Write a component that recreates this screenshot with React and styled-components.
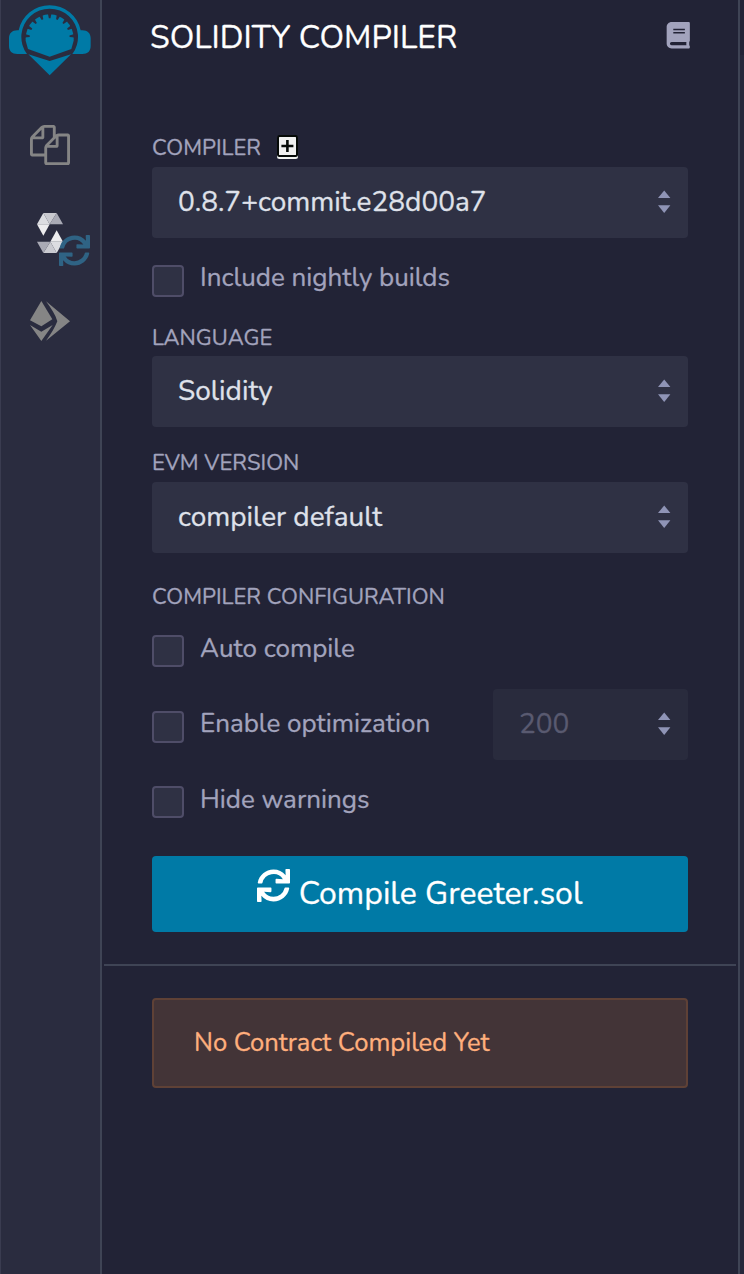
import React, { useState } from 'react';
import styled, { createGlobalStyle } from 'styled-components';
import { FaBook, FaSync } from 'react-icons/fa';

const versions = ['0.8.7+commit.e28d00a7'];

const Logo = () => (
  <svg width="84" height="72" viewBox="24 12 252 216">
    <path
      fill="#007aa6"
      d="M56 91A95 95 0 0 1 242 91h5c16 0 25 9 25 24v23c0 15-9 24-25 24h-30a85 85 0 1 0-136 0H52c-16 0-25-9-25-24v-23c0-15 9-24 25-24z"
    />
    <path
      fill="#007aa6"
      d="M84 147L77 122V115A72 72 0 0 1 221 115v7l-7 25-65 23z"
    />
    <g fill="#2a2c3f">
      {[-84, -63, -42, -21, 0, 21, 42, 63, 84].map((deg) => (
        <path
          key={deg}
          d="M143.500 40h11l-3 15h-5z"
          transform={`rotate(${deg} 149 115)`}
        />
      ))}
    </g>
    <path fill="#007aa6" d="M85 163l64 20 64-20-64 63z" />
  </svg>
);

const FilesIcon = () => (
  <svg width="40" height="40" viewBox="0 0 1792 1792" fill="#858585">
    <path d="M1696 384q40 0 68 28t28 68v1216q0 40-28 68t-68 28h-960q-40 0-68-28t-28-68v-288h-544q-40 0-68-28t-28-68v-672q0-40 20-88t48-76l408-408q28-28 76-48t88-20h416q40 0 68 28t28 68v328q68-40 128-40h416zm-544 213l-299 299h299v-299zm-640-384l-299 299h299v-299zm196 647l316-316v-416h-384v416q0 40-28 68t-68 28h-416v640h512v-256q0-40 20-88t48-76zm956 804v-1152h-384v416q0 40-28 68t-68 28h-416v640h896z" />
  </svg>
);

const SolidityIcon = () => (
  <svg width="26" height="40" viewBox="111 39 78 120">
    <path fill="#dcdde1" d="M130 39l19 34h-38z" />
    <path fill="#c9cad0" d="M130 39h40l-21 34z" />
    <path fill="#a9aab5" d="M170 39l19 34h-40z" />
    <path fill="#ececee" d="M111 73h38l-19 34z" />
    <path fill="#ececee" d="M170 91l19 34h-38z" />
    <path fill="#dcdde1" d="M189 125l-19 34-19-34z" />
    <path fill="#c9cad0" d="M151 125l19 34h-40z" />
    <path fill="#a9aab5" d="M111 125h40l-21 34z" />
  </svg>
);

const DeployIcon = () => (
  <svg width="40" height="40" viewBox="90 303 120 120" fill="#858585">
    <path d="M124 303l33 55-33 21-34-18z" />
    <path d="M90 375l34 20 34-20-34 48z" />
    <path d="M138 304l72 60-72 58c16-22 26-38 34-58-6-20-18-38-34-60z" />
  </svg>
);

const PlusIcon = () => (
  <svg width="21" height="24" viewBox="0 0 21 24">
    <rect y="1" width="21" height="23" rx="2.5" fill="#f2f4f2" />
    <rect width="21" height="22" rx="2.5" fill="#060a08" />
    <rect x="2" y="2" width="17" height="18" rx="0.5" fill="#f0f0f0" />
    <path d="M10.400 5v12M4.400 11h12" stroke="#060a08" strokeWidth="2.6" />
  </svg>
);

const Carets = () => (
  <svg width="13" height="24" viewBox="0 0 13 24" fill="#8f94b6">
    <path d="M6.200 0.500L12.400 8H0z" />
    <path d="M0 15.200h12.400L6.200 23z" />
  </svg>
);

const SelectBox = ({ value }) => (
  <Select>
    {value}
    <Carets />
  </Select>
);

const App = () => {
  const [checked, setChecked] = useState({});
  const toggle = (name) => () =>
    setChecked({ ...checked, [name]: !checked[name] });

  return (
    <Page>
      <GlobalStyle />
      <Sidebar>
        <Logo />
        <NavItem $top={49} $left={29}>
          <FilesIcon />
        </NavItem>
        <NavItem $top={48} $left={36}>
          <SolidityIcon />
          <Badge>
            <FaSync size={31} />
          </Badge>
        </NavItem>
        <NavItem $top={48} $left={29}>
          <DeployIcon />
        </NavItem>
      </Sidebar>
      <Panel>
        <Header>
          <Title>SOLIDITY COMPILER</Title>
          <FaBook size={26.5} />
        </Header>
        <Section>
          <Label $top={62} $bottom={7}>
            COMPILER
            <PlusIcon />
          </Label>
          <SelectBox value={versions[0]} />
          <CheckRow $top={27}>
            <Checkbox onClick={toggle('nightly')} $on={checked.nightly} />
            <CheckText $lift={5}>Include nightly builds</CheckText>
          </CheckRow>
          <Label $top={29} $bottom={6}>
            LANGUAGE
          </Label>
          <SelectBox value="Solidity" />
          <Label $top={24} $bottom={7}>
            EVM VERSION
          </Label>
          <SelectBox value="compiler default" />
          <Label $top={32} $bottom={0}>
            COMPILER CONFIGURATION
          </Label>
          <CheckRow $top={26}>
            <Checkbox onClick={toggle('auto')} $on={checked.auto} />
            <CheckText $lift={4}>Auto compile</CheckText>
          </CheckRow>
          <OptimizeRow>
            <CheckRow $top={22}>
              <Checkbox onClick={toggle('optimize')} $on={checked.optimize} />
              <CheckText $lift={5}>Enable optimization</CheckText>
            </CheckRow>
            <Runs>
              200
              <Carets />
            </Runs>
          </OptimizeRow>
          <CheckRow $top={26}>
            <Checkbox onClick={toggle('warnings')} $on={checked.warnings} />
            <CheckText $lift={4}>Hide warnings</CheckText>
          </CheckRow>
          <CompileButton>
            <FaSync size={33} />
            <span>Compile Greeter.sol</span>
          </CompileButton>
        </Section>
        <Divider />
        <Section>
          <Alert>No Contract Compiled Yet</Alert>
        </Section>
      </Panel>
      <Editor>
        <EditorTabs />
      </Editor>
    </Page>
  );
};

export default App;

const GlobalStyle = createGlobalStyle`
  * {
    box-sizing: border-box;
  }
  body {
    margin: 0;
    background: #222336;
    font-family: Nunito, 'Nunito Sans', Lato, 'Open Sans', sans-serif;
    -webkit-text-stroke: 0.3px currentColor;
  }
  svg {
    display: block;
    flex-shrink: 0;
  }
`;

const Page = styled.div`
  display: flex;
  width: 744px;
  height: 1274px;
  overflow: hidden;
`;

const Sidebar = styled.nav`
  width: 102px;
  flex-shrink: 0;
  padding: 4px 0 0 7px;
  background: #2a2c3f;
  border-left: 1px solid #3a3c50;
  border-right: 2px solid #3f4455;
`;

const NavItem = styled.div`
  position: relative;
  width: max-content;
  margin-top: ${(props) => props.$top}px;
  margin-left: ${(props) => props.$left - 7}px;
`;

const Badge = styled.span`
  position: absolute;
  left: 22px;
  top: 22px;
  color: #2f6384;
`;

const Panel = styled.main`
  width: 636px;
  flex-shrink: 0;
`;

const Header = styled.header`
  display: flex;
  align-items: flex-start;
  justify-content: space-between;
  height: 74px;
  padding: 15px 47px 0 48px;
  color: #a2a3bd;

  svg {
    margin-top: 7px;
  }
`;

const Title = styled.h6`
  margin: 1px 0 0;
  font-size: 32px;
  font-weight: 400;
  line-height: 44px;
  color: #fff;
`;

const Section = styled.section`
  padding: 0 50px;
`;

const Label = styled.div`
  display: flex;
  align-items: center;
  gap: 16px;
  height: 24px;
  margin-top: ${(props) => props.$top}px;
  margin-bottom: ${(props) => props.$bottom}px;
  font-size: 22px;
  line-height: 24px;
  color: #a2a3bd;

  svg {
    margin-top: -2px;
  }
`;

const Select = styled.div`
  display: flex;
  align-items: center;
  justify-content: space-between;
  height: 71px;
  padding: 0 17px 2px 26px;
  border-radius: 4px;
  background: #2f3144;
  font-size: 28px;
  color: #dfe1ea;

  svg {
    margin-top: 1px;
  }
`;

const Runs = styled(Select)`
  width: 195px;
  background: #292b3d;
  color: #595a70;
`;

const CheckRow = styled.div`
  display: flex;
  gap: 16px;
  height: 32px;
  margin-top: ${(props) => props.$top}px;
`;

const Checkbox = styled.button`
  width: 32px;
  height: 32px;
  padding: 0;
  border: 2px solid #4f4d68;
  border-radius: 4px;
  background: ${(props) => (props.$on ? '#007aa6' : '#2f3144')};
`;

const CheckText = styled.span`
  margin-top: -${(props) => props.$lift}px;
  font-size: 26px;
  line-height: 36px;
  color: #a2a3bd;
`;

const OptimizeRow = styled.div`
  display: flex;
  justify-content: space-between;
  margin-top: 22px;
`;

const CompileButton = styled.button`
  display: flex;
  justify-content: center;
  width: 100%;
  height: 76px;
  margin-top: 38px;
  padding: 13px 1px 0 0;
  gap: 9px;
  border: none;
  border-radius: 4px;
  background: #007aa6;
  font-family: inherit;
  font-size: 32px;
  color: #fff;

  span {
    margin-top: 3px;
    line-height: 44px;
  }
`;

const Divider = styled.div`
  height: 2px;
  margin: 32px 2px;
  background: #3f4455;
`;

const Alert = styled.div`
  height: 90px;
  padding: 0 40px;
  border: 2px solid #5f4136;
  border-radius: 4px;
  background: #433437;
  font-size: 25.6px;
  line-height: 86px;
  color: #ffaf7d;
`;

const Editor = styled.aside`
  flex: 1;
  border-left: 2px solid #3f4455;
  background: #26283b;
`;

const EditorTabs = styled.div`
  height: 55px;
  background: #222336;
`;
